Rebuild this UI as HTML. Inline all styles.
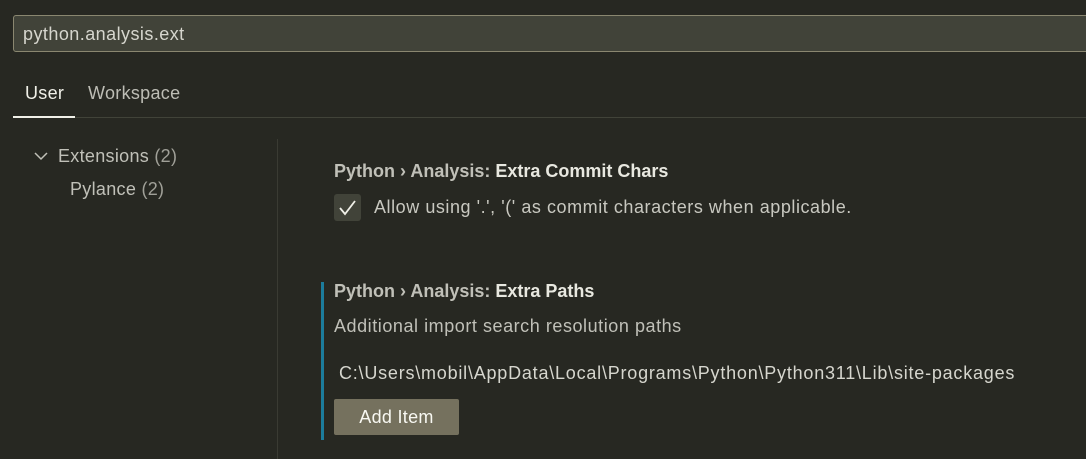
<!DOCTYPE html>
<html><head><style>
body{margin:0;width:1086px;height:459px;background:#272822;font-family:"Liberation Sans",sans-serif;color:#c8c8c0;overflow:hidden;position:relative;font-size:18px;letter-spacing:0.55px}
.a{position:absolute;white-space:nowrap}
.search{left:13px;top:15px;width:1080px;height:37px;background:#414339;border:1px solid #8a8770;border-radius:3px;box-sizing:border-box}
b{font-weight:bold;color:#e8e8e0}
.h{font-weight:bold;color:#c0c0b8;letter-spacing:0}
</style></head><body>
<div class="a search"></div>
<div class="a" style="left:23px;top:24px;color:#d6d6ce;letter-spacing:0.45px">python.analysis.ext</div>
<div class="a" style="left:25px;top:83px;color:#f0f0e8;letter-spacing:0.3px">User</div>
<div class="a" style="left:88px;top:83px;color:#bdbdb5;letter-spacing:0.3px">Workspace</div>
<div class="a" style="left:13px;top:117px;width:1073px;height:1px;background:#414339"></div>
<div class="a" style="left:13px;top:116px;width:62px;height:2px;background:#f0f0e8"></div>
<svg class="a" style="left:33px;top:149px" width="16" height="14"><path d="M2 4 L8 10 L14 4" stroke="#c0c0b8" stroke-width="1.5" fill="none"/></svg>
<div class="a" style="left:58px;top:146px;color:#c0c0b8;letter-spacing:0.3px">Extensions <span style="color:#a0a098">(2)</span></div>
<div class="a" style="left:70px;top:179px;color:#c0c0b8;letter-spacing:0.3px">Pylance <span style="color:#a0a098">(2)</span></div>
<div class="a" style="left:277px;top:139px;width:1px;height:320px;background:#3a3b33"></div>
<div class="a h" style="left:334px;top:161px">Python › Analysis: <b>Extra Commit Chars</b></div>
<div class="a" style="left:334px;top:194px;width:27px;height:27px;background:#414339;border-radius:3px"></div>
<svg class="a" style="left:334px;top:194px" width="27" height="27"><path d="M6 14 L11 20 L21 7" stroke="#f0f0e8" stroke-width="1.8" fill="none"/></svg>
<div class="a" style="left:374px;top:197px;color:#c8c8c0">Allow using '.', '(' as commit characters when applicable.</div>
<div class="a" style="left:321px;top:282px;width:3px;height:158px;background:#1c7c9c"></div>
<div class="a h" style="left:334px;top:281px">Python › Analysis: <b>Extra Paths</b></div>
<div class="a" style="left:334px;top:316px;color:#c0c0b8">Additional import search resolution paths</div>
<div class="a" style="left:339px;top:363px;color:#d6d6ce;letter-spacing:0.78px">C:\Users\mobil\AppData\Local\Programs\Python\Python311\Lib\site-packages</div>
<div class="a" style="left:334px;top:399px;width:125px;height:36px;background:#75715e;border-radius:2px;color:#f8f8f2;text-align:center;line-height:36px;letter-spacing:0.3px">Add Item</div>
</body></html>
